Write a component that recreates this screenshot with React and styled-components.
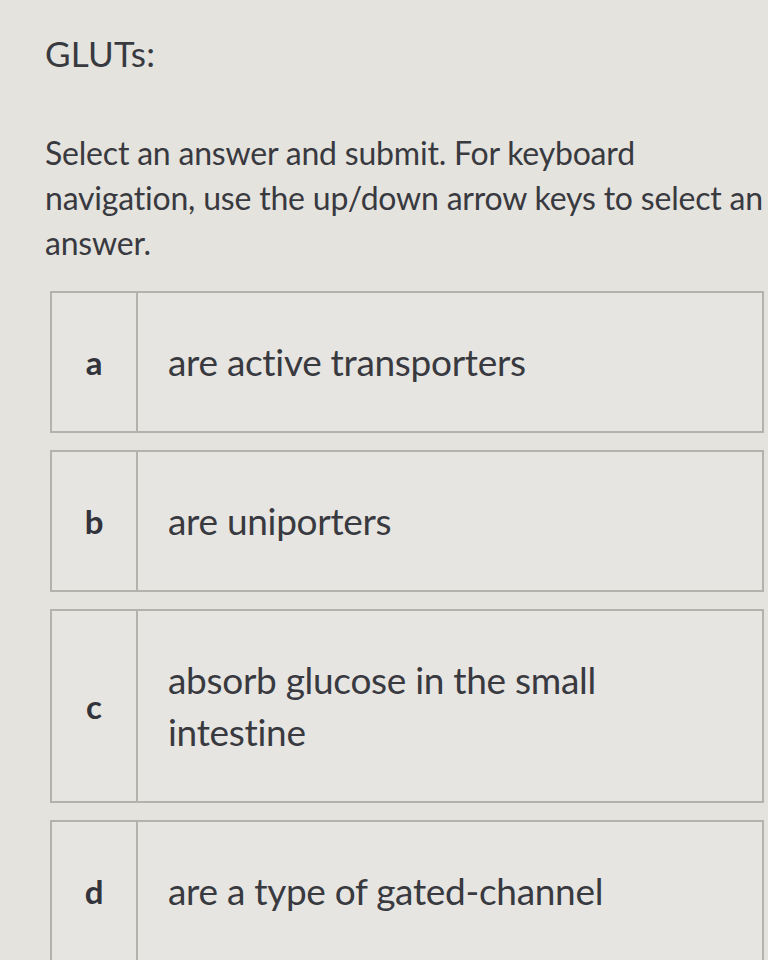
import React from "react";
import styled, { createGlobalStyle } from "styled-components";

const GlobalStyle = createGlobalStyle`
  html, body {
    margin: 0;
    padding: 0;
    background: #e4e3de;
  }
  body {
    font-family: Lato, "Open Sans", "Noto Sans", sans-serif;
    color: #393940;
  }
`;

const Page = styled.main`
  padding: 32px 0 0 45px;
  overflow: hidden;
  height: 960px;
  box-sizing: border-box;
`;

const Title = styled.h1`
  margin: 0;
  font-size: 35px;
  font-weight: 400;
  line-height: 42px;
  letter-spacing: 0.2px;
`;

const Prompt = styled.p`
  margin: 56px 0 0;
  max-width: 720px;
  font-size: 32px;
  line-height: 45px;
  letter-spacing: -0.2px;
`;

const Choices = styled.ul`
  list-style: none;
  margin: 26px 4px 0 5px;
  padding: 0;
  display: flex;
  flex-direction: column;
  gap: 17px;
`;

const Choice = styled.li`
  display: grid;
  grid-template-columns: 86px 1fr;
  border: 2px solid #b3b3ae;
  background: #e6e5e1;
`;

const Key = styled.span`
  display: flex;
  align-items: center;
  justify-content: center;
  border-right: 2px solid #b3b3ae;
  font-size: 33px;
  font-weight: 700;
  color: #33333b;
`;

const Label = styled.span`
  padding: 43px 110px 43px 30px;
  font-size: 37px;
  line-height: 52px;
  letter-spacing: -0.3px;
`;

const options = [
  { key: "a", text: "are active transporters" },
  { key: "b", text: "are uniporters" },
  { key: "c", text: "absorb glucose in the small intestine" },
  { key: "d", text: "are a type of gated-channel" },
];

export default function App() {
  return (
    <>
      <GlobalStyle />
      <Page>
        <Title>GLUTs:</Title>
        <Prompt>
          Select an answer and submit. For keyboard navigation, use the up/down
          arrow keys to select an answer.
        </Prompt>
        <Choices role="radiogroup">
          {options.map((o) => (
            <Choice key={o.key} role="radio" aria-checked="false">
              <Key>{o.key}</Key>
              <Label>{o.text}</Label>
            </Choice>
          ))}
        </Choices>
      </Page>
    </>
  );
}
